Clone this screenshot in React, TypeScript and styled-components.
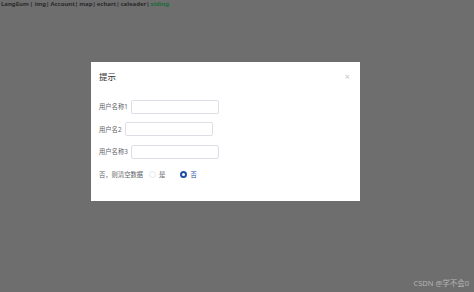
import styled, { createGlobalStyle } from "styled-components";

const GlobalStyle = createGlobalStyle`
  html, body {
    margin: 0;
    padding: 0;
    background: #6e6e6e;
    font-family: "Noto Sans", "Noto Sans CJK SC", sans-serif;
  }
`;

const Page = styled.div`
  width: 474px;
  height: 292px;
  position: relative;
  overflow: hidden;
  background: #6e6e6e;
`;

const Nav = styled.div`
  display: flex;
  gap: 1px;
  padding: 0 0 0 1px;
  height: 10px;
  line-height: 9px;
  font-size: 6px;
  font-weight: 700;
  color: #2a2a2a;
`;

const NavItem = styled.span<{ $active?: boolean }>`
  color: ${p => (p.$active ? "#1d6b3c" : "#2a2a2a")};
`;

const Dialog = styled.div`
  margin: 52px 0 0 91px;
  width: 269px;
  height: 139px;
  background: #fff;
  box-sizing: border-box;
  padding: 8px 8px 0 8px;
`;

const Head = styled.div`
  display: flex;
  justify-content: space-between;
  align-items: center;
  height: 12px;
  margin-bottom: 17px;
`;

const Title = styled.div`
  font-size: 8.5px;
  color: #303133;
`;

const Close = styled.div`
  font-size: 9px;
  color: #c0c4cc;
  margin-right: 2px;
`;

const Form = styled.div`
  display: flex;
  flex-direction: column;
  gap: 7.5px;
`;

const Row = styled.div`
  display: flex;
  align-items: center;
  height: 15px;
`;

const Label = styled.span`
  font-size: 6.3px;
  color: #606266;
  margin-right: 3px;
  white-space: nowrap;
`;

const Input = styled.div`
  width: 88px;
  height: 14px;
  box-sizing: border-box;
  border: 1px solid #dcdfe6;
  border-radius: 2px;
`;

const Radio = styled.span<{ $checked?: boolean }>`
  width: 7px;
  height: 7px;
  box-sizing: border-box;
  border-radius: 50%;
  border: ${p => (p.$checked ? "2px solid #1f4fa5" : "1px solid #e4e7ed")};
  background: #fff;
  margin: 0 3px 0 3px;
`;

const RadioText = styled.span<{ $checked?: boolean }>`
  font-size: 6.3px;
  color: ${p => (p.$checked ? "#1f4fa5" : "#606266")};
  margin-right: 12px;
`;

const Mark = styled.div`
  position: absolute;
  right: 5px;
  bottom: 4px;
  font-size: 7.5px;
  color: #b4b4b4;
`;

const App = () => {
  return (
    <>
      <GlobalStyle />
      <Page>
        <Nav>
          <NavItem>LangEum</NavItem>
          <NavItem>| img|</NavItem>
          <NavItem>Account|</NavItem>
          <NavItem>map|</NavItem>
          <NavItem>echart|</NavItem>
          <NavItem>caleader|</NavItem>
          <NavItem $active>xiding</NavItem>
        </Nav>
        <Dialog>
          <Head>
            <Title>提示</Title>
            <Close>×</Close>
          </Head>
          <Form>
            <Row>
              <Label>用户名称1</Label>
              <Input />
            </Row>
            <Row>
              <Label>用户名2</Label>
              <Input />
            </Row>
            <Row>
              <Label>用户名称3</Label>
              <Input />
            </Row>
            <Row>
              <Label>否，则清空数据</Label>
              <Radio />
              <RadioText>是</RadioText>
              <Radio $checked />
              <RadioText $checked>否</RadioText>
            </Row>
          </Form>
        </Dialog>
        <Mark>CSDN @学不会0</Mark>
      </Page>
    </>
  );
};

export default App;
